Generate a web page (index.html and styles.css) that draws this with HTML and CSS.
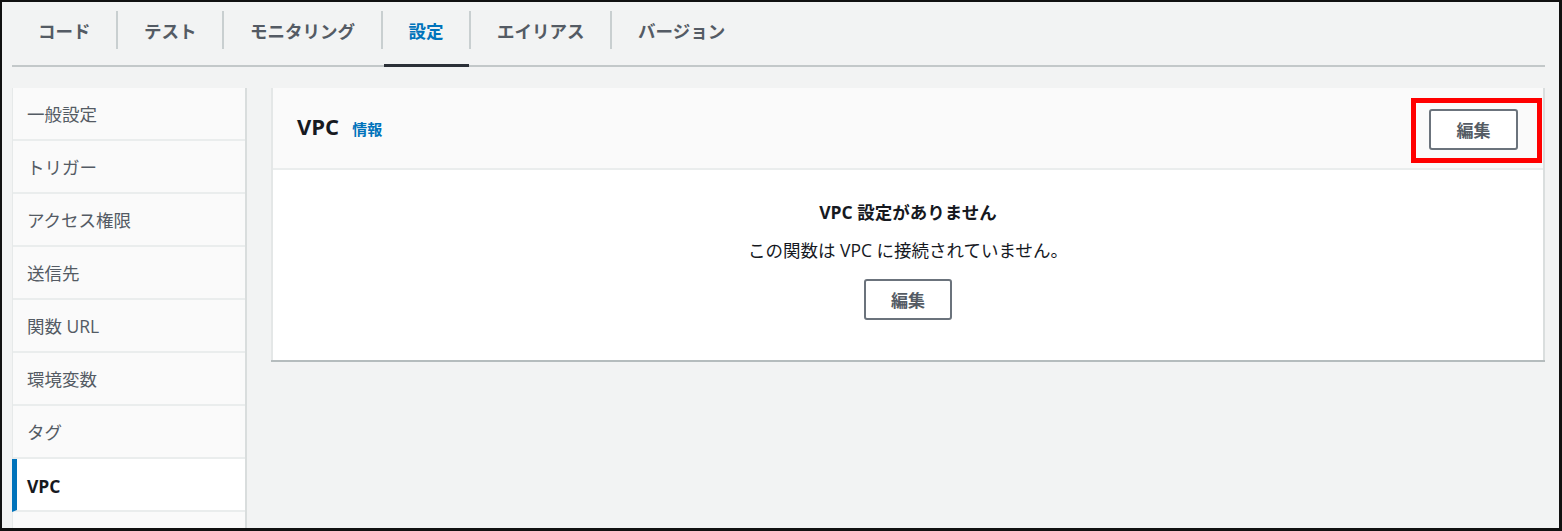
FILE: index.html
```html
<!DOCTYPE html>
<html lang="ja">
<head>
<meta charset="utf-8">
<title>VPC</title>
<link rel="stylesheet" href="styles.css">
</head>
<body>
<div class="frame">
  <nav class="tabs">
    <div class="tab">コード</div>
    <div class="sep"></div>
    <div class="tab">テスト</div>
    <div class="sep"></div>
    <div class="tab">モニタリング</div>
    <div class="sep"></div>
    <div class="tab active">設定</div>
    <div class="sep"></div>
    <div class="tab">エイリアス</div>
    <div class="sep"></div>
    <div class="tab">バージョン</div>
  </nav>
  <div class="main">
    <aside class="side">
      <div class="item">一般設定</div>
      <div class="item">トリガー</div>
      <div class="item">アクセス権限</div>
      <div class="item">送信先</div>
      <div class="item">関数 URL</div>
      <div class="item">環境変数</div>
      <div class="item">タグ</div>
      <div class="item selected">VPC</div>
      <div class="item"></div>
    </aside>
    <section class="panel">
      <header class="head">
        <div class="title"><h2>VPC</h2><a class="info">情報</a></div>
        <div class="hl">
          <button class="btn">編集</button>
        </div>
      </header>
      <div class="body">
        <p class="empty-title">VPC 設定がありません</p>
        <p class="empty-text">この関数は VPC に接続されていません。</p>
        <button class="btn small">編集</button>
      </div>
    </section>
  </div>
</div>
</body>
</html>
```
FILE: styles.css
```css
* { box-sizing: border-box; }
html, body { margin: 0; padding: 0; }
body {
  font-family: "Open Sans", "Noto Sans CJK JP", sans-serif;
  color: #545b64;
  background: #f2f3f3;
}
.frame {
  width: 1562px;
  height: 531px;
  border: 2px solid #111;
  border-right-width: 3px;
  border-bottom-width: 3px;
  background: #f2f3f3;
  overflow: hidden;
  padding: 0 14px 0 10px;
}
.tabs {
  display: flex;
  align-items: center;
  height: 65px;
  border-bottom: 2px solid #c3c8c9;
}
.tab {
  height: 100%;
  display: flex;
  align-items: center;
  padding: 0 25.5px 6px 26px;
  font-size: 17.5px;
  font-weight: 700;
  color: #545b64;
  position: relative;
}
.tab.active { color: #0073bb; }
.tab.active::after {
  content: "";
  position: absolute;
  left: 1px;
  right: 0;
  bottom: -2px;
  height: 3px;
  background: #2b3037;
}
.sep {
  width: 2px;
  height: 38px;
  margin-top: -8px;
  background: #c9cfd0;
}
.main {
  display: flex;
  gap: 24px;
  padding-top: 21px;
  align-items: flex-start;
}
.side {
  width: 235px;
  flex: none;
  background: #fafafa;
  border-left: 1px solid #e6e9e9;
  border-right: 2px solid #d9dddd;
}
.item {
  height: 53px;
  border-bottom: 2px solid #eaeded;
  padding: 0 14px;
  display: flex;
  align-items: center;
  font-size: 17.5px;
  color: #545b64;
}
.item.selected {
  background: #fff;
  color: #16191f;
  font-weight: 700;
  border-left: 5px solid #0073bb;
  margin-left: -1px;
  padding-left: 10px;
  padding-top: 3px;
}
.panel {
  flex: 1;
  background: #fff;
  border-left: 2px solid #e4e7e7;
  border-right: 2px solid #dadede;
  box-shadow: 0 2px 0 #b5bcbd;
  height: 272px;
}
.head {
  height: 82px;
  background: #fafafa;
  border-bottom: 2px solid #eaeded;
  display: flex;
  align-items: center;
  justify-content: space-between;
  padding: 0 24px 0 24px;
}
.title { display: flex; align-items: center; gap: 13px; }
.title h2 {
  margin: 0 0 4px;
  font-size: 22px;
  font-weight: 700;
  color: #16191f;
}
.info {
  font-size: 15px;
  font-weight: 700;
  color: #0073bb;
  margin-top: 0;
}
.hl {
  position: relative;
  margin-right: 1px;
  margin-top: 2px;
}
.hl::before {
  content: "";
  position: absolute;
  left: -18px;
  right: -24px;
  top: -11px;
  bottom: -13px;
  border: 5px solid #ff0000;
}
.btn {
  width: 89px;
  height: 41px;
  background: #fff;
  border: 2px solid #6b737c;
  border-radius: 3px;
  font-family: "Open Sans", "Noto Sans CJK JP", sans-serif;
  font-size: 17px;
  font-weight: 700;
  color: #545b64;
  padding: 0;
}
.btn.small { width: 88px; height: 41px; }
.body {
  display: flex;
  flex-direction: column;
  align-items: center;
  padding-top: 30px;
}
.empty-title {
  margin: 0;
  font-size: 17.5px;
  font-weight: 700;
  color: #16191f;
  line-height: 24px;
}
.empty-text {
  margin: 14px 0 17px;
  font-size: 17.5px;
  color: #16191f;
  line-height: 24px;
}
```
